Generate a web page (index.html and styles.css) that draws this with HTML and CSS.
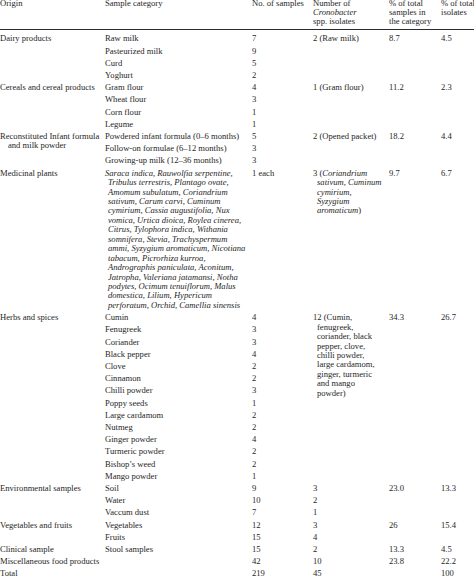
FILE: index.html
```html
<!DOCTYPE html>
<html>
<head>
<meta charset="utf-8">
<link rel="stylesheet" href="styles.css">
</head>
<body>
<div class="table">
  <div class="row head">
    <div class="c1">Origin</div>
    <div class="c2">Sample category</div>
    <div class="c3">No. of samples</div>
    <div class="c4">Number of<br><i>Cronobacter</i><br>spp. isolates</div>
    <div class="c5">% of total<br>samples in<br>the category</div>
    <div class="c6">% of total<br>isolates</div>
  </div>
  <div class="body">
    <div class="row group">
      <div class="c1 cell">Dairy products</div>
      <div class="c2"><div class="sub">Raw milk</div><div class="sub">Pasteurized milk</div><div class="sub">Curd</div><div class="sub">Yoghurt</div></div>
      <div class="c3"><div class="sub">7</div><div class="sub">9</div><div class="sub">5</div><div class="sub">2</div></div>
      <div class="c4 cell">2 (Raw milk)</div>
      <div class="c5 cell">8.7</div>
      <div class="c6 cell">4.5</div>
    </div>
    <div class="row group">
      <div class="c1 cell">Cereals and cereal products</div>
      <div class="c2"><div class="sub">Gram flour</div><div class="sub">Wheat flour</div><div class="sub">Corn flour</div><div class="sub">Legume</div></div>
      <div class="c3"><div class="sub">4</div><div class="sub">3</div><div class="sub">1</div><div class="sub">1</div></div>
      <div class="c4 cell">1 (Gram flour)</div>
      <div class="c5 cell">11.2</div>
      <div class="c6 cell">2.3</div>
    </div>
    <div class="row group">
      <div class="c1 cell hang1">Reconstituted Infant formula<br>and milk powder</div>
      <div class="c2"><div class="sub">Powdered infant formula (0–6 months)</div><div class="sub">Follow-on formulae (6–12 months)</div><div class="sub">Growing-up milk (12–36 months)</div></div>
      <div class="c3"><div class="sub">5</div><div class="sub">3</div><div class="sub">3</div></div>
      <div class="c4 cell">2 (Opened packet)</div>
      <div class="c5 cell">18.2</div>
      <div class="c6 cell">4.4</div>
    </div>
    <div class="row group">
      <div class="c1 cell">Medicinal plants</div>
      <div class="c2"><div class="sub hang2"><i>Saraca indica, Rauwolfia serpentine,<br>Tribulus terrestris, Plantago ovate,<br>Amomum subulatum, Coriandrium<br>sativum, Carum carvi, Cuminum<br>cymirium, Cassia augustifolia, Nux<br>vomica, Urtica dioica, Roylea cinerea,<br>Citrus, Tylophora indica, Withania<br>somnifera, Stevia, Trachyspermum<br>ammi, Syzygium aromaticum, Nicotiana<br>tabacum, Picrorhiza kurroa,<br>Andrographis paniculata, Aconitum,<br>Jatropha, Valeriana jatamansi, Notha<br>podytes, Ocimum tenuiflorum, Malus<br>domestica, Lilium, Hypericum<br>perforatum, Orchid, Camellia sinensis</i></div></div>
      <div class="c3"><div class="sub">1 each</div></div>
      <div class="c4 cell hang4">3 (<i>Coriandrium<br>sativum, Cuminum<br>cymirium,<br>Syzygium<br>aromaticum</i>)</div>
      <div class="c5 cell">9.7</div>
      <div class="c6 cell">6.7</div>
    </div>
    <div class="row group">
      <div class="c1 cell">Herbs and spices</div>
      <div class="c2"><div class="sub">Cumin</div><div class="sub">Fenugreek</div><div class="sub">Coriander</div><div class="sub">Black pepper</div><div class="sub">Clove</div><div class="sub">Cinnamon</div><div class="sub">Chilli powder</div><div class="sub">Poppy seeds</div><div class="sub">Large cardamom</div><div class="sub">Nutmeg</div><div class="sub">Ginger powder</div><div class="sub">Turmeric powder</div><div class="sub">Bishop’s weed</div><div class="sub">Mango powder</div></div>
      <div class="c3"><div class="sub">4</div><div class="sub">3</div><div class="sub">3</div><div class="sub">4</div><div class="sub">2</div><div class="sub">2</div><div class="sub">3</div><div class="sub">1</div><div class="sub">2</div><div class="sub">2</div><div class="sub">4</div><div class="sub">2</div><div class="sub">2</div><div class="sub">1</div></div>
      <div class="c4 cell hang4">12 (Cumin,<br>fenugreek,<br>coriander, black<br>pepper, clove,<br>chilli powder,<br>large cardamom,<br>ginger, turmeric<br>and mango<br>powder)</div>
      <div class="c5 cell">34.3</div>
      <div class="c6 cell">26.7</div>
    </div>
    <div class="row group">
      <div class="c1 cell">Environmental samples</div>
      <div class="c2"><div class="sub">Soil</div><div class="sub">Water</div><div class="sub">Vaccum dust</div></div>
      <div class="c3"><div class="sub">9</div><div class="sub">10</div><div class="sub">7</div></div>
      <div class="c4"><div class="sub">3</div><div class="sub">2</div><div class="sub">1</div></div>
      <div class="c5 cell">23.0</div>
      <div class="c6 cell">13.3</div>
    </div>
    <div class="row group">
      <div class="c1 cell">Vegetables and fruits</div>
      <div class="c2"><div class="sub">Vegetables</div><div class="sub">Fruits</div></div>
      <div class="c3"><div class="sub">12</div><div class="sub">15</div></div>
      <div class="c4"><div class="sub">3</div><div class="sub">4</div></div>
      <div class="c5 cell">26</div>
      <div class="c6 cell">15.4</div>
    </div>
    <div class="row group">
      <div class="c1 cell">Clinical sample</div>
      <div class="c2"><div class="sub">Stool samples</div></div>
      <div class="c3"><div class="sub">15</div></div>
      <div class="c4 cell">2</div>
      <div class="c5 cell">13.3</div>
      <div class="c6 cell">4.5</div>
    </div>
    <div class="row group">
      <div class="c1 cell">Miscellaneous food products</div>
      <div class="c2"></div>
      <div class="c3"><div class="sub">42</div></div>
      <div class="c4 cell">10</div>
      <div class="c5 cell">23.8</div>
      <div class="c6 cell">22.2</div>
    </div>
    <div class="row group">
      <div class="c1 cell">Total</div>
      <div class="c2"></div>
      <div class="c3"><div class="sub">219</div></div>
      <div class="c4 cell">45</div>
      <div class="c5 cell"></div>
      <div class="c6 cell">100</div>
    </div>
  </div>
</div>
</body>
</html>
```

FILE: styles.css
```css
html, body {
  margin: 0;
  padding: 0;
  background: #ffffff;
}

body {
  width: 474px;
  height: 581px;
  overflow: hidden;
  font-family: "Liberation Serif", "Times New Roman", serif;
  font-size: 8.6px;
  color: #262626;
}

.table {
  margin-top: -1.4px;
}

.row {
  display: grid;
  grid-template-columns: 105px 147px 61px 76px 52px 33px;
  white-space: nowrap;
}

.head {
  line-height: 9.2px;
  padding-bottom: 2.8px;
  border-bottom: 1.2px solid #2b2b2b;
}

.body {
  padding-top: 1.6px;
  line-height: 9.45px;
}

.sub,
.cell {
  padding-top: 2.75px;
}

.hang1 {
  padding-left: 8px;
  text-indent: -8px;
}

.hang2 {
  padding-left: 3px;
  text-indent: -3px;
}

.hang4 {
  padding-left: 4px;
  text-indent: -4px;
}
```
